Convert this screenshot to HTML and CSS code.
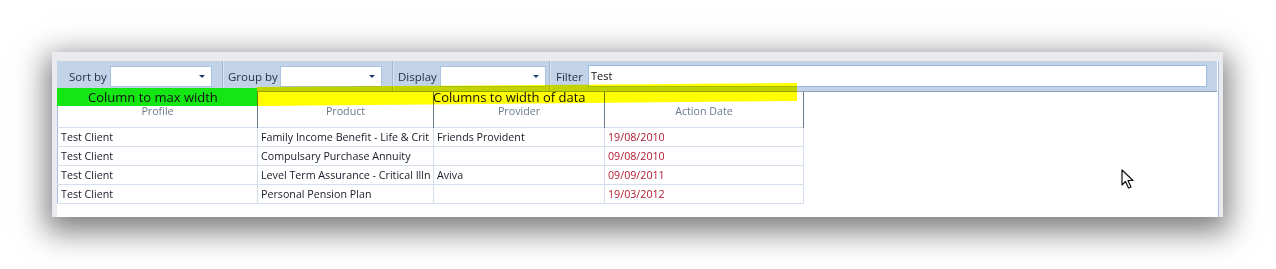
FILE: index.html
```html
<!DOCTYPE html>
<html lang="en">
<head>
    <meta charset="UTF-8">
    <title>Client Products</title>
    <link rel="stylesheet" href="styles.css">
</head>
<body>
    <div class="window">
        <div class="content">
            <div class="toolbar">
                <div class="group first">
                    <span class="tb-label w-sort">Sort by</span>
                    <div class="combo c-sort"><span class="arrow"></span></div>
                </div>
                <div class="group">
                    <span class="tb-label w-group">Group by</span>
                    <div class="combo c-group"><span class="arrow"></span></div>
                </div>
                <div class="group narrow">
                    <span class="tb-label w-display">Display</span>
                    <div class="combo c-display"><span class="arrow"></span></div>
                </div>
                <div class="group filter">
                    <span class="tb-label w-filter">Filter</span>
                    <div class="filter-box">Test</div>
                </div>
            </div>

            <table class="grid">
                <colgroup>
                    <col class="col-profile">
                    <col class="col-product">
                    <col class="col-provider">
                    <col class="col-date">
                </colgroup>
                <thead>
                    <tr>
                        <th>Profile</th>
                        <th>Product</th>
                        <th>Provider</th>
                        <th>Action Date</th>
                    </tr>
                </thead>
                <tbody>
                    <tr>
                        <td>Test Client</td>
                        <td>Family Income Benefit - Life &amp; Crit</td>
                        <td>Friends Provident</td>
                        <td class="date">19/08/2010</td>
                    </tr>
                    <tr>
                        <td>Test Client</td>
                        <td>Compulsary Purchase Annuity</td>
                        <td></td>
                        <td class="date">09/08/2010</td>
                    </tr>
                    <tr>
                        <td>Test Client</td>
                        <td>Level Term Assurance - Critical Illn</td>
                        <td>Aviva</td>
                        <td class="date">09/09/2011</td>
                    </tr>
                    <tr>
                        <td>Test Client</td>
                        <td>Personal Pension Plan</td>
                        <td></td>
                        <td class="date">19/03/2012</td>
                    </tr>
                </tbody>
            </table>

            <!-- notes drawn over the screenshot -->
            <div class="note-green">Column to max width</div>
            <div class="note-yellow"></div>
            <div class="note-yellow-text">Columns to width of data</div>

            <svg class="cursor" width="14" height="21" viewBox="0 0 14 21">
                <path d="M1 1 L1 16 L4.5 12.5 L7.5 19 L10 18 L7 11.5 L12 11.5 Z" fill="#fff" stroke="#111" stroke-width="1.2" stroke-linejoin="round"></path>
            </svg>
        </div>
    </div>
</body>
</html>
```

FILE: styles.css
```css
body {
    margin: 0;
    width: 1276px;
    height: 269px;
    background-color: #ffffff;
    font-family: "Open Sans", "Liberation Sans", sans-serif;
    overflow: hidden;
}
.window {
    margin: 52px 0 0 52px;
    width: 1171px;
    height: 165px;
    box-sizing: border-box;
    padding: 9px 4px 0 5px;
    background-color: #e9ebef;
    box-shadow: 0 9px 28px 6px rgba(0, 0, 0, 0.5);
}
.content {
    position: relative;
    height: 156px;
    background-color: #ffffff;
    border-right: 1px solid #a8c0e6;
}
.toolbar {
    display: flex;
    height: 30px;
    margin-right: 1px;
    background-color: #c2d3e8;
    border-bottom: 1px solid #8fa3bb;
}
.group {
    display: flex;
    align-items: center;
    padding: 0 10px 0 5px;
    border-right: 1px solid #a3b6ce;
    box-shadow: 1px 0 0 #d9e4f2;
}
.group.first {
    padding-left: 12px;
}
.group.narrow {
    padding-right: 3px;
}
.group.filter {
    flex: 1;
    border-right: none;
    box-shadow: none;
    padding-left: 6px;
    padding-right: 10px;
}
.tb-label {
    font-size: 11.5px;
    color: #1e2f47;
}
.w-sort { width: 41px; }
.w-group { width: 52px; }
.w-display { width: 42px; }
.w-filter { width: 32px; }
.combo {
    position: relative;
    height: 21px;
    box-sizing: border-box;
    background-color: #ffffff;
    border: 1px solid #a9c3e2;
}
.c-sort { width: 102px; }
.c-group { width: 102px; }
.c-display { width: 106px; }
.arrow {
    position: absolute;
    right: 6px;
    top: 8px;
    width: 0;
    height: 0;
    border-left: 3px solid transparent;
    border-right: 3px solid transparent;
    border-top: 3px solid #1f3d69;
}
.filter-box {
    flex: 1;
    height: 22px;
    box-sizing: border-box;
    padding: 2px 0 0 2px;
    background-color: #ffffff;
    border: 1px solid #9dbde6;
    font-size: 11px;
    color: #111111;
}
.grid {
    border-collapse: collapse;
    table-layout: fixed;
    width: 747px;
    border-left: 1px solid #a8c0e6;
    font-size: 10.7px;
    color: #1a1a2a;
}
.col-profile { width: 200px; }
.col-product { width: 176px; }
.col-provider { width: 171px; }
.col-date { width: 199px; }
.grid th {
    height: 32px;
    padding: 3px 0 0 0;
    font-weight: normal;
    color: #6c7a8e;
    border-right: 1px solid;
    border-image: linear-gradient(to bottom, rgba(213, 223, 238, 0.2), #d5dfee 40%, #d5dfee 70%, rgba(213, 223, 238, 0)) 1;
    border-left: none;
    border-top: none;
    border-bottom: none;
}
.grid td {
    height: 18px;
    padding: 0 2px 0 3px;
    border: 1px solid #d3deee;
    white-space: nowrap;
    overflow: hidden;
}
.grid td:first-child {
    border-left: none;
}
.date {
    color: #b2182f;
}
.note-green {
    position: absolute;
    left: 0;
    top: 27px;
    width: 200px;
    height: 18px;
    box-sizing: border-box;
    padding-left: 31px;
    background-color: #14e614;
    font-size: 13px;
    line-height: 18px;
    color: #111111;
}
.note-yellow {
    position: absolute;
    left: 200px;
    top: 22px;
    width: 540px;
    height: 23px;
    background-color: #ffff00;
    mix-blend-mode: multiply;
    clip-path: polygon(0 4px, 100% 0, 100% 18px, 0 23px);
}
.note-yellow-text {
    position: absolute;
    left: 376px;
    top: 28px;
    font-size: 13px;
    line-height: 16px;
    color: #111111;
}
.cursor {
    position: absolute;
    left: 1064px;
    top: 108px;
}
```
